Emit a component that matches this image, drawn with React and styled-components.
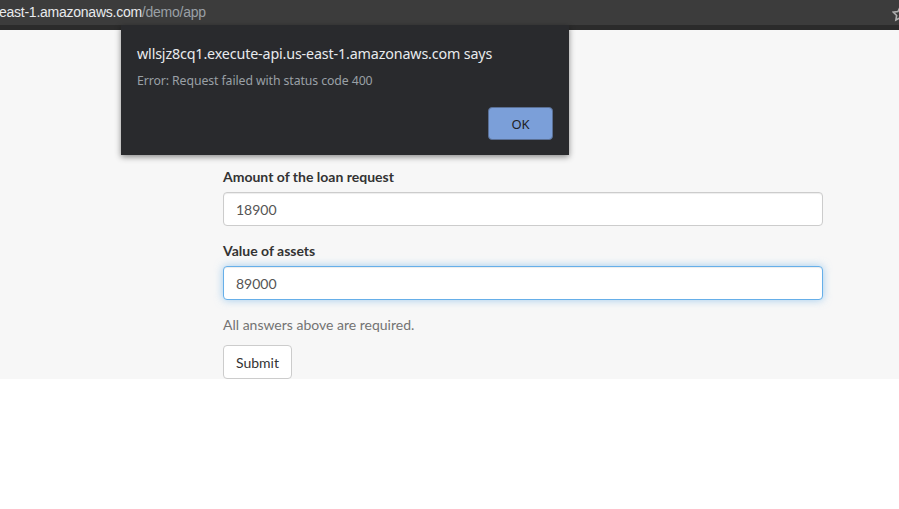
import React from 'react'
import styled, { createGlobalStyle } from 'styled-components'

const GlobalStyle = createGlobalStyle`
  html, body {
    margin: 0;
    padding: 0;
    background: #ffffff;
  }
  body {
    font-family: Lato, "Liberation Sans", sans-serif;
    font-size: 14px;
    line-height: 20px;
    color: #333333;
  }
`;

const Screen = styled.div`
  position: relative;
  width: 899px;
  height: 509px;
  overflow: hidden;
  background: #ffffff;
`;

const AddressBar = styled.div`
  height: 25px;
  background: #3c3c3c;
  border-bottom: 5px solid #2b2b2b;
  display: flex;
  align-items: center;
  justify-content: space-between;
  overflow: hidden;
  font-family: "Liberation Sans", Arial, sans-serif;
  font-size: 14px;
`;

const Url = styled.div`
  margin-left: -1px;
  margin-top: -1px;
  color: #e8eaed;
  letter-spacing: -0.25px;
  white-space: nowrap;
`;

const UrlPath = styled.span`
  color: #9aa0a6;
`;

const Star = styled.svg`
  margin-right: -9px;
  margin-top: 2px;
  flex-shrink: 0;
`;

const Page = styled.div`
  background: #f7f7f7;
  padding: 137px 0 0 223px;
`;

const Form = styled.form`
  width: 600px;
`;

const FormGroup = styled.div`
  margin-bottom: 15px;
`;

const Label = styled.label`
  display: block;
  font-weight: 700;
  margin-bottom: 5px;
  color: #333333;
`;

const Input = styled.input`
  display: block;
  box-sizing: border-box;
  width: 100%;
  height: 34px;
  padding: 6px 12px;
  font-family: Lato, "Liberation Sans", sans-serif;
  font-size: 14px;
  color: #555555;
  background: #ffffff;
  border: 1px solid ${p => (p.$focused ? '#66afe9' : '#cccccc')};
  border-radius: 4px;
  box-shadow: ${p =>
    p.$focused
      ? 'inset 0 1px 1px rgba(0,0,0,.075), 0 0 8px rgba(102,175,233,.6)'
      : 'inset 0 1px 1px rgba(0,0,0,.075)'};
  outline: none;
`;

const Help = styled.p`
  margin: 0 0 10px;
  color: #737373;
`;

const SubmitButton = styled.button`
  display: block;
  box-sizing: border-box;
  height: 34px;
  padding: 6px 12px;
  font-family: Lato, "Liberation Sans", sans-serif;
  font-size: 14px;
  color: #333333;
  background: #ffffff;
  border: 1px solid #cccccc;
  border-radius: 4px;
`;

const Dialog = styled.div`
  position: absolute;
  left: 121px;
  top: 25px;
  width: 448px;
  height: 130px;
  box-sizing: border-box;
  padding: 19px 16px 0 16px;
  background: #292a2d;
  box-shadow: 0 2px 6px rgba(0, 0, 0, 0.45);
  font-family: "Noto Sans", "Open Sans", sans-serif;
  display: flex;
  flex-direction: column;
`;

const DialogTitle = styled.div`
  font-size: 14.3px;
  line-height: 20px;
  color: #e8eaed;
  letter-spacing: -0.15px;
`;

const DialogMessage = styled.div`
  margin-top: 8px;
  font-size: 12.3px;
  line-height: 18px;
  color: #9aa0a6;
  letter-spacing: -0.1px;
`;

const DialogActions = styled.div`
  display: flex;
  justify-content: flex-end;
  margin-top: 17px;
`;

const OkButton = styled.button`
  width: 65px;
  height: 33px;
  box-sizing: border-box;
  border: 1px solid #5a6f94;
  border-radius: 4px;
  background: #7b9fd9;
  color: #202124;
  font-family: "Noto Sans", "Open Sans", sans-serif;
  font-size: 13px;
`;

export default function App() {
  return (
    <Screen>
      <GlobalStyle />
      <AddressBar>
        <Url>
          east-1.amazonaws.com<UrlPath>/demo/app</UrlPath>
        </Url>
        <Star width="16" height="16" viewBox="0 0 24 24" fill="none" stroke="#b0b0b0" strokeWidth="2.4">
          <path d="M12 2l3.1 6.3 6.9 1-5 4.9 1.2 6.8L12 17.8 5.8 21l1.2-6.8-5-4.9 6.9-1z" />
        </Star>
      </AddressBar>

      <Page>
        <Form onSubmit={e => e.preventDefault()}>
          <FormGroup>
            <Label>Amount of the loan request</Label>
            <Input type="text" defaultValue="18900" />
          </FormGroup>
          <FormGroup>
            <Label>Value of assets</Label>
            <Input type="text" defaultValue="89000" $focused />
          </FormGroup>
          <Help>All answers above are required.</Help>
          <SubmitButton type="submit">Submit</SubmitButton>
        </Form>
      </Page>

      <Dialog>
        <DialogTitle>wllsjz8cq1.execute-api.us-east-1.amazonaws.com says</DialogTitle>
        <DialogMessage>Error: Request failed with status code 400</DialogMessage>
        <DialogActions>
          <OkButton>OK</OkButton>
        </DialogActions>
      </Dialog>
    </Screen>
  )
}
